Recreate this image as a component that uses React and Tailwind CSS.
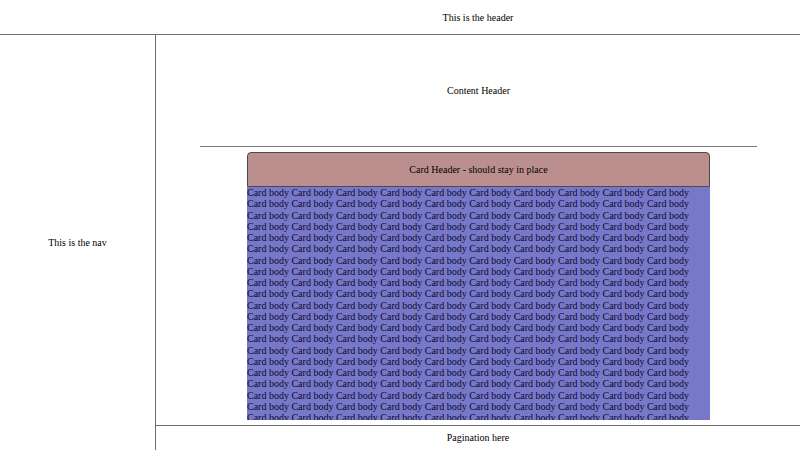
export default function App() {
  const body = Array.from({ length: 320 }, () => "Card body").join(" ");
  return (
    <div
      className="h-[450px] w-[800px] flex flex-col overflow-hidden bg-white text-black text-[10px]"
      style={{ fontFamily: '"Liberation Serif", "Times New Roman", serif' }}
    >
      <div className="h-[35px] shrink-0 border-b border-[#6e6e6e] flex items-center justify-center pl-[156px]">
        This is the header
      </div>
      <div className="flex flex-1 min-h-0">
        <div className="w-[156px] shrink-0 border-r border-[#6e6e6e] flex items-center justify-center">
          This is the nav
        </div>
        <div className="flex-1 min-w-0 flex flex-col">
          <div className="flex-1 min-h-0 flex flex-col ml-[44px] mr-[43px]">
            <div className="h-[112px] shrink-0 border-b border-[#7a7a7a] flex items-center justify-center">
              Content Header
            </div>
            <div className="flex-1 min-h-0 flex flex-col px-[47px] pt-[5px] pb-[5px]">
              <div className="h-[35px] shrink-0 bg-[#bc8f8f] border border-[#4a4a4a] rounded-t-[4px] flex items-center justify-center pb-px">
                Card Header - should stay in place
              </div>
              <div className="flex-1 min-h-0 overflow-hidden bg-[#7878c8] leading-[11.25px] text-[#0a0a30]">
                {body}
              </div>
            </div>
          </div>
          <div className="h-[25px] shrink-0 border-t border-[#6e6e6e] flex items-center justify-center pb-px">
            Pagination here
          </div>
        </div>
      </div>
    </div>
  );
}
